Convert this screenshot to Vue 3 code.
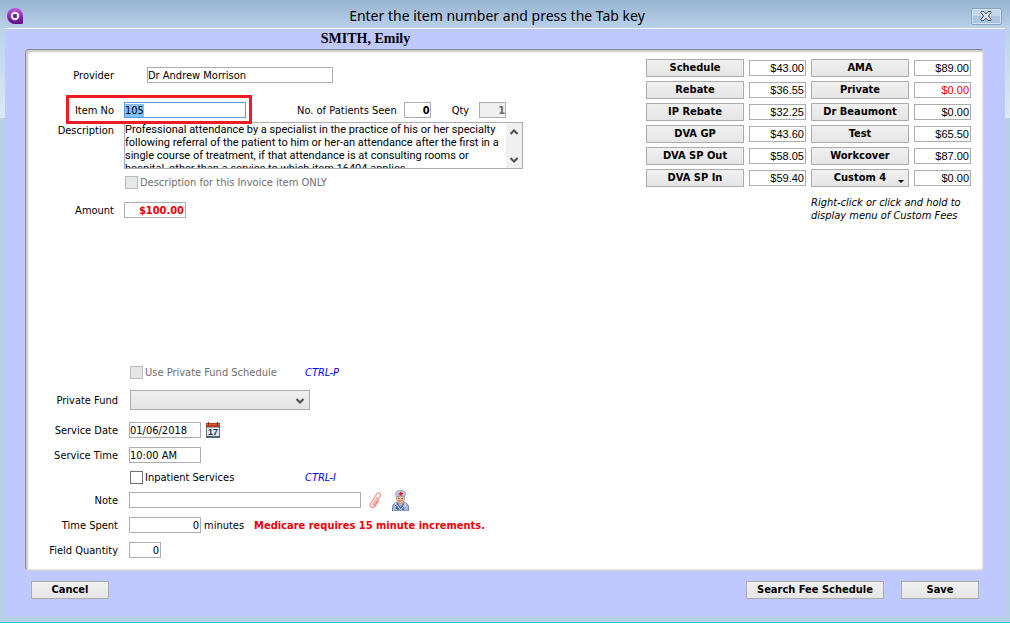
<script setup>
import { onMounted, ref } from 'vue'

const itemNo = ref('105')
const itemInput = ref(null)
const description = ref(
  [
    'Professional attendance by a specialist in the practice of his or her specialty',
    'following referral of the patient to him or her-an attendance after the first in a',
    'single course of treatment, if that attendance is at consulting rooms or',
    'hospital, other than a service to which item 16404 applies',
  ].join('\n')
)

const fees = [
  { name: 'Schedule', value: '$43.00' },
  { name: 'AMA', value: '$89.00' },
  { name: 'Rebate', value: '$36.55' },
  { name: 'Private', value: '$0.00', alert: true },
  { name: 'IP Rebate', value: '$32.25' },
  { name: 'Dr Beaumont', value: '$0.00' },
  { name: 'DVA GP', value: '$43.60' },
  { name: 'Test', value: '$65.50' },
  { name: 'DVA SP Out', value: '$58.05' },
  { name: 'Workcover', value: '$87.00' },
  { name: 'DVA SP In', value: '$59.40' },
  { name: 'Custom 4', value: '$0.00', menu: true },
]

onMounted(() => {
  itemInput.value.focus()
  itemInput.value.select()
})
</script>

<template>
  <div class="window">
    <header class="titlebar">
      <svg class="logo" viewBox="0 0 16 16" aria-hidden="true">
        <defs>
          <linearGradient id="logo-fill" x1="0" y1="0" x2="0" y2="1">
            <stop offset="0" stop-color="#c455e8" />
            <stop offset="1" stop-color="#5e0a86" />
          </linearGradient>
        </defs>
        <path d="M8 0a8 8 0 0 1 8 8v6.500q0 1.500-1.500 1.500H8A8 8 0 0 1 8 0z" fill="url(#logo-fill)" />
        <circle cx="8" cy="8" r="3.200" fill="#8a2bb4" stroke="#fff" stroke-width="2" />
        <circle cx="8" cy="8" r="1.300" fill="#6c1496" />
      </svg>
      <h1 class="title">Enter the item number and press the Tab key</h1>
      <button class="close" type="button" aria-label="Close">
        <svg viewBox="0 0 12 10" aria-hidden="true">
          <path d="M1 .5h3l2 2.500 2-2.500h3v1L8.500 5 11 8.500v1H8l-2-2.500-2 2.500H1v-1L3.500 5 1 1.500z" fill="#dde3ea" stroke="#4d5866" />
        </svg>
      </button>
    </header>

    <main class="client">
      <h2 class="patient">SMITH, Emily</h2>

      <form class="panel" @submit.prevent>
        <div class="form">
          <section class="group">
            <div class="row provider">
              <label for="provider">Provider</label>
              <input id="provider" type="text" value="Dr Andrew Morrison" />
            </div>
            <div class="row item">
              <label for="item">Item No</label>
              <input id="item" ref="itemInput" v-model="itemNo" type="text" />
              <span class="highlight"></span>
              <div class="counts">
                <label for="seen">No. of Patients Seen</label>
                <input id="seen" class="count" type="text" value="0" />
                <label class="qty" for="qty">Qty</label>
                <input id="qty" class="count" type="text" value="1" disabled />
              </div>
            </div>
            <div class="row description">
              <label for="description">Description</label>
              <div class="memo">
                <textarea id="description" v-model="description"></textarea>
                <div class="scroll">
                  <button type="button" aria-label="Scroll up">
                    <svg viewBox="0 0 8 6" aria-hidden="true"><path d="M.5 5 4 1.500 7.500 5" /></svg>
                  </button>
                  <button type="button" aria-label="Scroll down">
                    <svg viewBox="0 0 8 6" aria-hidden="true"><path d="M.5 1 4 4.500 7.500 1" /></svg>
                  </button>
                </div>
              </div>
            </div>
            <div class="row check invoice">
              <input id="only" type="checkbox" disabled />
              <label for="only">Description for this Invoice item ONLY</label>
            </div>
            <div class="row amount">
              <label for="amount">Amount</label>
              <input id="amount" type="text" value="$100.00" />
            </div>
          </section>

          <section class="group lower">
            <div class="row check fund">
              <input id="usefund" type="checkbox" disabled />
              <label for="usefund">Use Private Fund Schedule</label>
              <kbd>CTRL-P</kbd>
            </div>
            <div class="row select-row">
              <label for="fund">Private Fund</label>
              <div class="combo">
                <select id="fund"><option></option></select>
                <svg viewBox="0 0 8 6" aria-hidden="true"><path d="M.5 1 4 4.500 7.500 1" /></svg>
              </div>
            </div>
            <div class="row date">
              <label for="date">Service Date</label>
              <input id="date" class="short" type="text" value="01/06/2018" />
              <button class="icon" type="button" aria-label="Choose date">
                <svg class="calendar" viewBox="0 0 14 16" aria-hidden="true">
                  <path d="M.5 5h13v10H.5z" fill="#dfe8f2" stroke="#66727f" />
                  <path d="M0 1h14v4H0z" fill="#bd3420" />
                  <path d="M0 2h14v1H0z" fill="#dc6048" />
                  <path d="M2 0h1v3H2zM11 0h1v3h-1z" fill="#8d2415" />
                  <path d="M0 14h14v2H0z" fill="#566373" />
                  <text x="7" y="13" text-anchor="middle">17</text>
                </svg>
              </button>
            </div>
            <div class="row time">
              <label for="time">Service Time</label>
              <input id="time" class="short" type="text" value="10:00 AM" />
            </div>
            <div class="row check inpatient">
              <input id="inpatient" type="checkbox" />
              <label for="inpatient">Inpatient Services</label>
              <kbd>CTRL-I</kbd>
            </div>
            <div class="row note">
              <label for="note">Note</label>
              <input id="note" type="text" />
              <button class="icon clip-button" type="button" aria-label="Attach file">
                <svg class="clip" viewBox="0 0 13 17" aria-hidden="true">
                  <path d="M8.500 5 4.300 11.500c-.8 1.400.6 2.200 1.500.9L11 4.500C12.700 1.500 9.300-.5 7.500 2.300L2 10.700c-2.200 3.800 2 6.500 4.300 3.100L10 8" />
                </svg>
              </button>
              <button class="icon" type="button" aria-label="Select doctor">
                <svg class="doctor" viewBox="0 0 17 21" aria-hidden="true">
                  <path d="M.5 21v-4.500q0-2.500 3-3.500L6 12h5l2.500 1q3 1 3 3.500V21z" fill="#a9b9dc" stroke="#7485ab" />
                  <path d="M5 12.500 8.500 17l3.500-4.500V20H5z" fill="#416bb4" />
                  <path d="M7 12h3v2l-1.500 2L7 14z" fill="#e3ad91" />
                  <path d="M3.500 13v4M13 13v3.500M5 15l3.500 5 4-5" fill="none" stroke="#e9eefb" />
                  <path d="M4.500 6v3.500q1 4 4 4t4-4V6z" fill="#f0c3a5" stroke="#a58478" stroke-width=".7" />
                  <path d="M4.500 6.500C2 2.500 5 .5 8.500.5s6.500 2 4 6q-4-1.500-8 0z" fill="#c3cee8" stroke="#7788ad" stroke-width=".8" />
                  <path d="M8 2h1.500v1H11v1.500H9.500v1H8v-1H6.500V3H8z" fill="#e51c23" />
                  <path d="M6 8.500h1.500M9.500 8.500H11" stroke="#544b50" />
                  <path d="M6.500 10.500q2 1.500 4 0" fill="none" stroke="#a15045" stroke-width=".8" />
                  <path d="M3 14.500q2 2 1.500 4.500" fill="none" stroke="#344b79" />
                </svg>
              </button>
            </div>
            <div class="row spent">
              <label for="spent">Time Spent</label>
              <input id="spent" class="short number" type="text" value="0" />
              <span class="unit">minutes</span>
              <strong>Medicare requires 15 minute increments.</strong>
            </div>
            <div class="row field-qty">
              <label for="fieldqty">Field Quantity</label>
              <input id="fieldqty" class="number" type="text" value="0" />
            </div>
          </section>
        </div>

        <aside class="fees">
          <template v-for="fee in fees" :key="fee.name">
            <button class="push" type="button">
              {{ fee.name }}
              <span v-if="fee.menu" class="arrow"></span>
            </button>
            <input
              type="text"
              :class="{ alert: fee.alert }"
              :value="fee.value"
              :aria-label="fee.name + ' fee'"
            />
          </template>
          <p class="hint">Right-click or click and hold to<br />display menu of Custom Fees</p>
        </aside>
      </form>

      <footer class="actions">
        <button class="push cancel" type="button">Cancel</button>
        <button class="push search" type="button">Search Fee Schedule</button>
        <button class="push save" type="button">Save</button>
      </footer>
    </main>
  </div>
</template>

<style>
body {
  margin: 0;
}
</style>

<style scoped>
.window,
.window * {
  box-sizing: border-box;
}
.window {
  display: flex;
  flex-direction: column;
  min-height: 100vh;
  padding: 0 5px 6px;
  border-bottom: 1px solid #2cc8e6;
  background:
    linear-gradient(#98b3d0, #b9d2ea) top / 100% 28px no-repeat,
    linear-gradient(#b9d2ea, #dce9f5) 0 28px / 100% 90px no-repeat,
    #b7d1e8;
  color: #000;
  font: 11px/13px "DejaVu Sans Condensed", "Noto Sans", sans-serif;
}
input,
textarea,
select,
button {
  margin: 0;
  padding: 0;
  border: 1px solid #abadb3;
  border-radius: 0;
  background: #fff;
  color: #000;
  font: inherit;
  outline: none;
}
input[type='text'] {
  height: 16px;
}
label,
.unit,
strong,
kbd {
  white-space: nowrap;
}

.titlebar {
  display: flex;
  align-items: center;
  justify-content: space-between;
  height: 28px;
  padding: 4px 3px 0 2px;
}
.logo {
  width: 16px;
  height: 16px;
}
.title {
  margin: 0;
  font: 14px/20px "Noto Sans", sans-serif;
}
.close {
  display: flex;
  align-items: center;
  justify-content: center;
  width: 31px;
  height: 17px;
  border-color: #8da3bd;
  border-radius: 2px;
  background: linear-gradient(#c4d8ec 50%, #acc6e0 50%);
  box-shadow: inset 0 0 0 1px #d6e4f2;
}
.close svg {
  width: 12px;
  height: 10px;
}

.client {
  display: flex;
  flex: 1;
  flex-direction: column;
  padding: 0 21px 17px 20px;
  border-top: 1px solid #f4f7fa;
  background: #bfc8ff;
}
.patient {
  margin: 0;
  padding-right: 278px;
  font: bold 14px/20px "Liberation Serif", serif;
  text-align: center;
}

.panel {
  display: flex;
  flex: 1;
  justify-content: space-between;
  border: 1px solid #d0d2d8;
  border-top-color: #83868f;
  border-left-color: #8d9099;
  border-radius: 4px;
  background: #fff;
  box-shadow: inset 2px 2px 2px #c8c8c8, inset -1px -1px 1px #e4e4e4;
}
.form {
  display: flex;
  flex-direction: column;
  justify-content: space-between;
  padding: 17px 0 12px;
}
.row {
  position: relative;
  display: flex;
  align-items: center;
  height: 16px;
}
.row > label:first-child {
  width: 88px;
  margin-right: 10px;
  text-align: right;
}
.lower .row > label:first-child {
  width: 92px;
  margin-right: 11px;
}
.row.provider > label:first-child {
  margin-right: 33px;
}
.provider input {
  width: 186px;
}
.item {
  margin-top: 19px;
}
.item > input {
  width: 122px;
  border-color: #569de5;
}
.item > input::selection {
  background: #83c0fc;
  color: #000;
}
.highlight {
  position: absolute;
  z-index: 1;
  top: -7px;
  left: 40px;
  width: 186px;
  height: 29px;
  border: 3px solid #ed1c24;
  pointer-events: none;
}
.counts {
  display: flex;
  align-items: center;
  margin-left: 51px;
}
.count {
  width: 27px;
  margin-left: 7px;
  font-weight: bold;
  text-align: right;
}
.count:disabled {
  margin-left: 10px;
  background: #f0f0f0;
  color: #6d6d6d;
}
.qty {
  margin-left: 21px;
}
.row.description {
  align-items: flex-start;
  height: 47px;
  margin-top: 4px;
}
.description label {
  padding-top: 2px;
}
.memo {
  display: flex;
  width: 399px;
  height: 47px;
  border: 1px solid #abadb3;
}
.memo textarea {
  flex: 1;
  min-width: 0;
  height: 45px;
  border: 0;
  overflow: hidden;
  font-family: Roboto, sans-serif;
  resize: none;
  white-space: pre;
}
.scroll {
  display: flex;
  flex-direction: column;
  justify-content: space-between;
  width: 16px;
  background: #f0f0f0;
}
.scroll button {
  display: flex;
  align-items: center;
  justify-content: center;
  height: 17px;
  border: 0;
  background: none;
}
.scroll svg,
.combo svg {
  width: 8px;
  height: 6px;
  fill: none;
  stroke: #505050;
  stroke-width: 2;
}

.check {
  height: 14px;
}
.check input {
  width: 13px;
  height: 13px;
  border: 1px solid #707070;
  appearance: none;
}
.check input:disabled {
  border-color: #bcbcbc;
  background: #e6e6e6;
}
.check input:disabled + label {
  color: #6d6d6d;
}
.check label {
  margin-left: 2px;
}
.invoice {
  margin-top: 6px;
  padding-left: 99px;
}
.amount {
  margin-top: 13px;
}
.amount input {
  width: 62px;
  padding-right: 1px;
  color: #ee0008;
  font-weight: bold;
  text-align: right;
}
.fund,
.inpatient {
  padding-left: 104px;
}
kbd {
  position: absolute;
  left: 279px;
  color: #0000f0;
  font: italic 11px/13px "DejaVu Sans Condensed", "Noto Sans", sans-serif;
}
.select-row {
  height: 20px;
  margin-top: 11px;
}
.combo {
  position: relative;
  width: 180px;
  height: 20px;
  margin-left: 1px;
}
.combo select {
  width: 100%;
  height: 20px;
  background: linear-gradient(#efefef, #e4e4e4);
  appearance: none;
}
.combo svg {
  position: absolute;
  top: 8px;
  right: 6px;
  pointer-events: none;
}
.date {
  margin-top: 12px;
}
.short {
  width: 72px;
}
.number {
  padding-right: 1px;
  text-align: right;
}
.icon {
  display: flex;
  flex: none;
  margin-left: 5px;
  border: 0;
  background: none;
}
.calendar {
  width: 14px;
  height: 16px;
}
.calendar text {
  font: bold 9px "Liberation Sans", sans-serif;
  fill: #20344c;
}
.time,
.spent,
.field-qty {
  margin-top: 9px;
}
.inpatient {
  margin-top: 7px;
}
.note {
  margin-top: 8px;
}
.note input {
  width: 232px;
}
.clip-button {
  margin-left: 8px;
}
.note .icon + .icon {
  margin-left: 10px;
}
.clip {
  width: 13px;
  height: 17px;
  fill: none;
  stroke: #f28f8b;
  stroke-width: 1.2;
}
.doctor {
  width: 17px;
  height: 21px;
}
.unit {
  margin-left: 3px;
}
strong {
  margin-left: 10px;
  color: #ee0008;
}
.field-qty input {
  width: 32px;
}

.push {
  position: relative;
  height: 18px;
  border-color: #acacac;
  background: linear-gradient(#f0f0f0, #e5e5e5);
  font-weight: bold;
  line-height: 14px;
  white-space: nowrap;
}
.fees {
  display: grid;
  grid-template-columns: 98px 57px 98px 57px;
  gap: 4px 5px;
  align-content: start;
  align-items: center;
  padding: 9px 12px 0 0;
}
.fees input {
  width: 100%;
  padding-right: 1px;
  font-family: "Liberation Sans", sans-serif;
  text-align: right;
}
.fees .alert {
  color: #f00000;
}
.arrow {
  position: absolute;
  right: 4px;
  bottom: 3px;
  border: 3px solid transparent;
  border-top-color: #000;
  border-bottom: 0;
}
.hint {
  grid-column: 3 / 5;
  margin: 5px 0 0;
  font-style: italic;
  white-space: nowrap;
}

.actions {
  display: flex;
  padding: 10px 5px 0 6px;
}
.cancel,
.save {
  width: 78px;
}
.search {
  width: 138px;
  margin: 0 17px 0 auto;
}
</style>
